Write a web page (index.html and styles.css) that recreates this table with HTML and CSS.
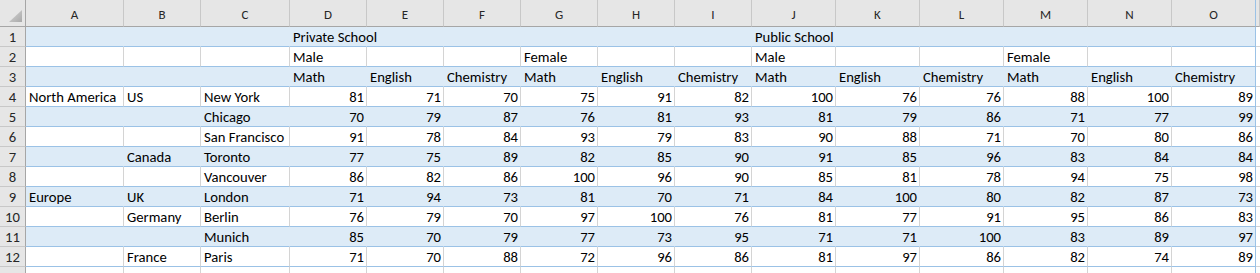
FILE: index.html
```html
<!DOCTYPE html>
<html lang="en">
<head>
    <meta charset="UTF-8">
    <title>School Scores</title>
    <link rel="stylesheet" href="styles.css">
</head>
<body>
    <div class="sheet">
        <div class="row head">
            <div class="corner"><span class="tri"></span></div>
            <div>A</div><div>B</div><div>C</div><div>D</div><div>E</div><div>F</div><div>G</div><div>H</div>
            <div>I</div><div>J</div><div>K</div><div>L</div><div>M</div><div>N</div><div>O</div><div></div>
        </div>
        <div class="row band">
            <div class="rn">1</div>
            <div></div><div></div><div></div><div>Private School</div><div></div><div></div><div></div><div></div>
            <div></div><div>Public School</div><div></div><div></div><div></div><div></div><div></div><div class="p"></div>
        </div>
        <div class="row">
            <div class="rn">2</div>
            <div></div><div></div><div></div><div>Male</div><div></div><div></div><div>Female</div><div></div>
            <div></div><div>Male</div><div></div><div></div><div>Female</div><div></div><div></div><div class="p"></div>
        </div>
        <div class="row band">
            <div class="rn">3</div>
            <div></div><div></div><div></div>
            <div>Math</div><div>English</div><div>Chemistry</div><div>Math</div><div>English</div><div>Chemistry</div>
            <div>Math</div><div>English</div><div>Chemistry</div><div>Math</div><div>English</div><div>Chemistry</div>
            <div class="p"></div>
        </div>
        <div class="row">
            <div class="rn">4</div>
            <div>North America</div><div>US</div><div>New York</div>
            <div class="n">81</div><div class="n">71</div><div class="n">70</div><div class="n">75</div><div class="n">91</div><div class="n">82</div>
            <div class="n">100</div><div class="n">76</div><div class="n">76</div><div class="n">88</div><div class="n">100</div><div class="n">89</div>
            <div class="p"></div>
        </div>
        <div class="row band">
            <div class="rn">5</div>
            <div></div><div></div><div>Chicago</div>
            <div class="n">70</div><div class="n">79</div><div class="n">87</div><div class="n">76</div><div class="n">81</div><div class="n">93</div>
            <div class="n">81</div><div class="n">79</div><div class="n">86</div><div class="n">71</div><div class="n">77</div><div class="n">99</div>
            <div class="p"></div>
        </div>
        <div class="row">
            <div class="rn">6</div>
            <div></div><div></div><div>San Francisco</div>
            <div class="n">91</div><div class="n">78</div><div class="n">84</div><div class="n">93</div><div class="n">79</div><div class="n">83</div>
            <div class="n">90</div><div class="n">88</div><div class="n">71</div><div class="n">70</div><div class="n">80</div><div class="n">86</div>
            <div class="p"></div>
        </div>
        <div class="row band">
            <div class="rn">7</div>
            <div></div><div>Canada</div><div>Toronto</div>
            <div class="n">77</div><div class="n">75</div><div class="n">89</div><div class="n">82</div><div class="n">85</div><div class="n">90</div>
            <div class="n">91</div><div class="n">85</div><div class="n">96</div><div class="n">83</div><div class="n">84</div><div class="n">84</div>
            <div class="p"></div>
        </div>
        <div class="row">
            <div class="rn">8</div>
            <div></div><div></div><div>Vancouver</div>
            <div class="n">86</div><div class="n">82</div><div class="n">86</div><div class="n">100</div><div class="n">96</div><div class="n">90</div>
            <div class="n">85</div><div class="n">81</div><div class="n">78</div><div class="n">94</div><div class="n">75</div><div class="n">98</div>
            <div class="p"></div>
        </div>
        <div class="row band">
            <div class="rn">9</div>
            <div>Europe</div><div>UK</div><div>London</div>
            <div class="n">71</div><div class="n">94</div><div class="n">73</div><div class="n">81</div><div class="n">70</div><div class="n">71</div>
            <div class="n">84</div><div class="n">100</div><div class="n">80</div><div class="n">82</div><div class="n">87</div><div class="n">73</div>
            <div class="p"></div>
        </div>
        <div class="row">
            <div class="rn">10</div>
            <div></div><div>Germany</div><div>Berlin</div>
            <div class="n">76</div><div class="n">79</div><div class="n">70</div><div class="n">97</div><div class="n">100</div><div class="n">76</div>
            <div class="n">81</div><div class="n">77</div><div class="n">91</div><div class="n">95</div><div class="n">86</div><div class="n">83</div>
            <div class="p"></div>
        </div>
        <div class="row band">
            <div class="rn">11</div>
            <div></div><div></div><div>Munich</div>
            <div class="n">85</div><div class="n">70</div><div class="n">79</div><div class="n">77</div><div class="n">73</div><div class="n">95</div>
            <div class="n">71</div><div class="n">71</div><div class="n">100</div><div class="n">83</div><div class="n">89</div><div class="n">97</div>
            <div class="p"></div>
        </div>
        <div class="row">
            <div class="rn">12</div>
            <div></div><div>France</div><div>Paris</div>
            <div class="n">71</div><div class="n">70</div><div class="n">88</div><div class="n">72</div><div class="n">96</div><div class="n">86</div>
            <div class="n">81</div><div class="n">97</div><div class="n">86</div><div class="n">82</div><div class="n">74</div><div class="n">89</div>
            <div class="p"></div>
        </div>
        <div class="row blank">
            <div class="rn"></div>
            <div></div><div></div><div></div><div></div><div></div><div></div><div></div><div></div>
            <div></div><div></div><div></div><div></div><div></div><div></div><div></div><div class="p"></div>
        </div>
    </div>
</body>
</html>
```

FILE: styles.css
```css
body {
    margin: 0;
    overflow: hidden;
    background-color: #fff;
}
.sheet {
    font-family: Carlito, "Liberation Sans", Arial, sans-serif;
    font-size: 11pt;
    color: #000;
}
.row {
    display: grid;
    grid-template-columns: 26px 98px 77px 89px repeat(6, 77px) repeat(6, 84px) 1fr;
    height: 20px;
}
.row > div {
    box-sizing: border-box;
    padding: 1px 2px 0 3px;
    line-height: 18px;
    white-space: nowrap;
    border-right: 1px solid #d4d4d4;
    border-bottom: 1px solid #9bc2e6;
}
.band {
    background-color: #ddebf7;
}
.band > div {
    border-right-color: transparent;
}
.row > div:nth-child(16) {
    border-right-color: #9bc2e6;
}
.row > .p {
    background-color: #fff;
    border-bottom-color: #d4d4d4;
    border-right-color: #d4d4d4;
}
.row > .n {
    text-align: right;
}
.row > .rn {
    background-color: #e6e6e6;
    color: #262626;
    text-align: center;
    padding: 1px 0 0;
    border-right: 1px solid #a6a6a6;
    border-bottom: 1px solid #c8c8c8;
}
.blank > div {
    border-bottom-color: #d4d4d4;
}

/* column header strip */
.head {
    height: 27px;
    background-color: #e6e6e6;
}
.head > div {
    font-size: 13px;
    color: #262626;
    text-align: center;
    line-height: 23px;
    padding: 3px 0 0;
    border-right: 1px solid #c8c8c8;
    border-bottom: 1px solid #a6a6a6;
}
.head > .corner {
    display: flex;
    align-items: flex-end;
    justify-content: flex-end;
    padding: 0 3px 4px 0;
    border-right-color: #a6a6a6;
}
.tri {
    width: 13px;
    height: 12px;
    background: linear-gradient(135deg, #d6d6d6, #a9a9a9);
    clip-path: polygon(100% 0, 100% 100%, 0 100%);
}
```
